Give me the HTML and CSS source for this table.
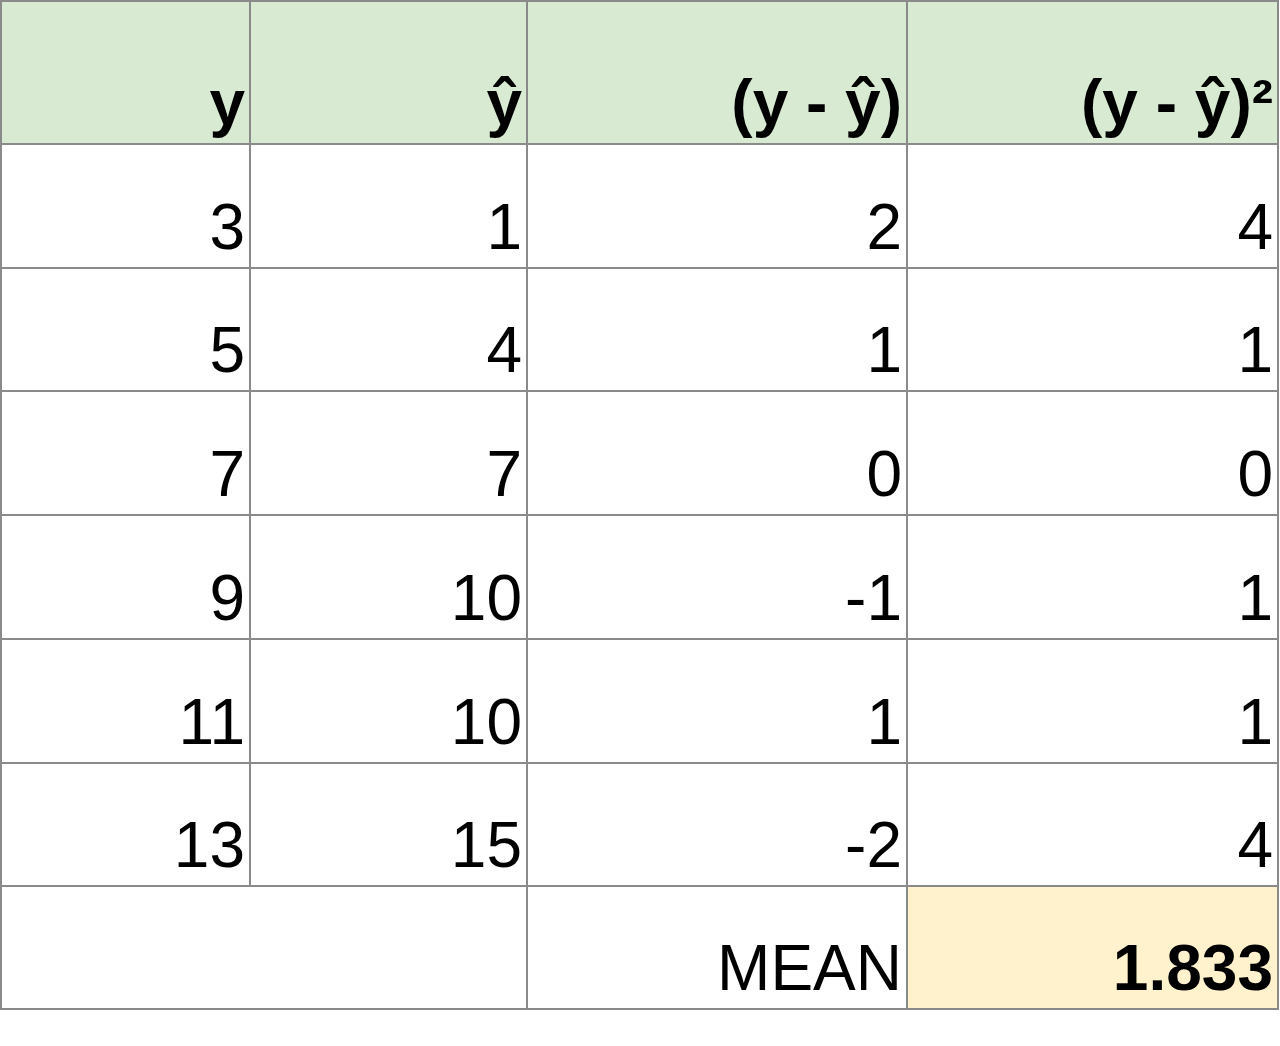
FILE: index.html
```html
<!DOCTYPE html>
<html lang="en">
<head>
    <meta charset="UTF-8">
    <meta name="viewport" content="width=device-width, initial-scale=1.0">
    <title>Squared Errors</title>
    <link rel="stylesheet" href="styles.css">
</head>
<body>

    <table class="error-table">
        <colgroup>
            <col class="col-y">
            <col class="col-yhat">
            <col class="col-diff">
            <col class="col-sq">
        </colgroup>
        <thead>
            <tr>
                <th>y</th>
                <th>ŷ</th>
                <th>(y - ŷ)</th>
                <th>(y - ŷ)²</th>
            </tr>
        </thead>
        <tbody>
            <tr><td>3</td><td>1</td><td>2</td><td>4</td></tr>
            <tr class="short"><td>5</td><td>4</td><td>1</td><td>1</td></tr>
            <tr><td>7</td><td>7</td><td>0</td><td>0</td></tr>
            <tr><td>9</td><td>10</td><td>-1</td><td>1</td></tr>
            <tr><td>11</td><td>10</td><td>1</td><td>1</td></tr>
            <tr class="short"><td>13</td><td>15</td><td>-2</td><td>4</td></tr>
            <!-- Summary row -->
            <tr class="short">
                <td colspan="2"></td>
                <td>MEAN</td>
                <td class="mean-value">1.833</td>
            </tr>
        </tbody>
    </table>

</body>
</html>
```

FILE: styles.css
```css
body {
    margin: 0;
    background-color: #fff;
    font-family: "Liberation Sans", Arial, sans-serif;
    color: #000;
}

.error-table {
    border-collapse: separate;
    border-spacing: 0;
    table-layout: fixed;
    width: 1279px;
    border-top: 2px solid #8a8a8a;
    border-left: 2px solid #8a8a8a;
}

.col-y { width: 249px; }
.col-yhat { width: 277px; }
.col-diff { width: 380px; }
.col-sq { width: 371px; }

/* cell height + 8px bottom padding + 2px border = row pitch */
.error-table th,
.error-table td {
    height: 114px;
    padding: 0 4px 8px 0;
    border-right: 2px solid #8a8a8a;
    border-bottom: 2px solid #8a8a8a;
    text-align: right;
    vertical-align: bottom;
    font-size: 64px;
    line-height: 64px;
    white-space: nowrap;
}

.error-table th {
    height: 133px;
    font-weight: bold;
    background-color: #d9ead3; /* light green header */
}

.error-table tr.short td {
    height: 113px;
}

.error-table .mean-value {
    font-weight: bold;
    background-color: #fff2cc; /* light yellow */
}
```
